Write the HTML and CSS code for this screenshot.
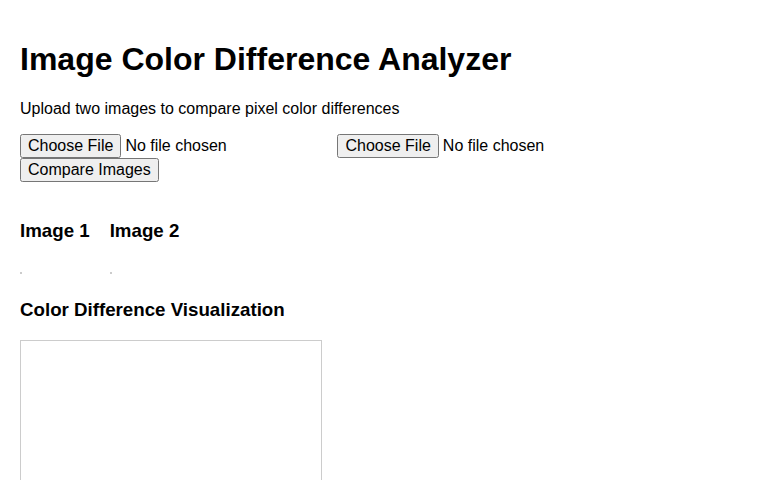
FILE: index.html
```html
<!DOCTYPE html>
<html lang="en">

<head>
    <meta charset="UTF-8">
    <meta name="viewport" content="width=device-width, initial-scale=1.0">
    <title>Image Color Difference Analyzer</title>
    <link rel="stylesheet" href="styles.css">
</head>

<body>
    <h1>Image Color Difference Analyzer</h1>
    <p>Upload two images to compare pixel color differences</p>

    <div class="controls">
        <input type="file" id="image1" accept="image/*">
        <input type="file" id="image2" accept="image/*">
        <button id="compare">Compare Images</button>
    </div>

    <div class="preview-row">
        <div class="preview">
            <h3>Image 1</h3>
            <span class="preview-img"></span>
        </div>
        <div class="preview">
            <h3>Image 2</h3>
            <span class="preview-img"></span>
        </div>
    </div>

    <h3>Color Difference Visualization</h3>
    <canvas id="diff-canvas" class="diff-canvas" width="300" height="150"></canvas>
</body>

</html>
```

FILE: styles.css
```css
body {
    margin: 0;
    padding: 20px;
    font-family: "Liberation Sans", Arial, sans-serif;
    color: #000;
    background: #fff;
}

input,
button {
    font-family: "Liberation Sans", Arial, sans-serif;
    font-size: 16px;
}

input[type="file"] {
    margin-right: 10px;
}

.controls {
    margin-bottom: 19px;
}

.preview-row {
    display: flex;
    gap: 20px;
    padding-bottom: 2px;
}

.preview-img {
    display: inline-block;
    width: 0;
    height: 0;
    border: 1px solid #ccc;
}

.diff-canvas {
    border: 1px solid #ccc;
}
```
